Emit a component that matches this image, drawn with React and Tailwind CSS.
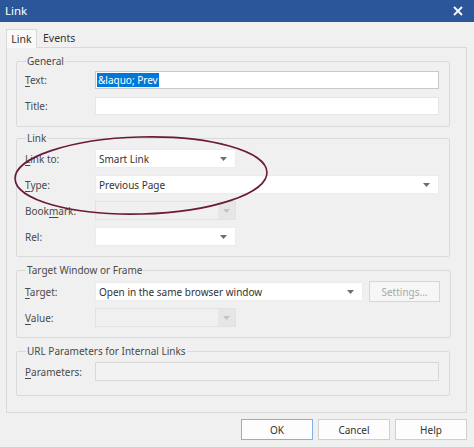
import React from 'react'

function Arrow({ light }) {
  return (
    <svg width="7" height="4" viewBox="0 0 7 4" className="shrink-0">
      <path d="M0 0 L7 0 L3.5 4 Z" fill={light ? '#c4c4c4' : '#6d6d6d'} />
    </svg>
  )
}

function Label({ text, u }) {
  // u = index of the access-key letter
  if (u === undefined) return <span className="w-[70px] shrink-0 text-[#4a4a4a]">{text}</span>
  return (
    <span className="w-[70px] shrink-0 text-[#4a4a4a]">
      {text.slice(0, u)}
      <span className="underline underline-offset-2">{text[u]}</span>
      {text.slice(u + 1)}
    </span>
  )
}

function Select({ value, width, disabled }) {
  if (disabled) {
    return (
      <div className={`${width} h-[19px] flex border border-[#e2e2e2] bg-[#f0f0f0]`}>
        <div className="flex-1" />
        <div className="w-[17px] bg-[#e6e6e6] flex items-center justify-center">
          <Arrow light />
        </div>
      </div>
    )
  }
  return (
    <div className={`${width} h-[19px] flex items-center justify-between bg-white border border-[#ececec] pl-[3px] pr-[8px]`}>
      <span className="text-[#333]">{value}</span>
      <Arrow />
    </div>
  )
}

function Group({ title, children, className }) {
  return (
    <fieldset className={`border border-[#dadada] rounded-[2px] pl-[8px] pr-[10px] ${className}`}>
      <legend className="ml-[1px] px-[1px] text-[#4a4a4a] leading-[16px]">{title}</legend>
      {children}
    </fieldset>
  )
}

function Row({ children, className }) {
  return <div className={`flex items-center ${className}`}>{children}</div>
}

export default function App() {
  return (
    <div className="w-[474px] h-[447px] bg-[#f0f0f0] relative flex flex-col font-['Segoe_UI','Noto_Sans',sans-serif] text-[10px] leading-[16px] overflow-hidden">
      {/* title bar */}
      <div className="h-[22px] bg-[#2b579a] flex items-center justify-between pl-[5px] pr-[11px] text-white">
        <span className="text-[11.5px]">Link</span>
        <svg width="10" height="10" viewBox="0 0 10 10">
          <path d="M1 1 L9 9 M9 1 L1 9" stroke="white" strokeWidth="1.8" />
        </svg>
      </div>

      {/* tabs */}
      <div className="flex items-end h-[25px] pl-[6px]">
        <div className="h-[19px] w-[31px] flex items-center justify-center bg-[#f9f9f9] border border-b-0 border-[#d9d9d9] text-[#333] text-[10.5px] -mb-px relative z-10">
          Link
        </div>
        <div className="h-[18px] px-[6px] flex items-center text-[#333] text-[10.5px]">Events</div>
      </div>

      {/* tab panel */}
      <div className="ml-[6px] w-[461px] h-[366px] border border-[#d9d9d9] pt-[5px] pl-[9px] pr-[16px] flex flex-col gap-[3px]">
        <Group title="General" className="pb-[11px]">
          <Row className="mt-[2px]">
            <Label text="Text:" u={0} />
            <div className="w-[344px] h-[18px] bg-white border border-[#c9c9c9] flex items-center pl-[1px]">
              <span className="bg-[#0078d7] text-white px-[1px] leading-[14px]">&amp;laquo; Prev</span>
            </div>
          </Row>
          <Row className="mt-[8px]">
            <Label text="Title:" />
            <div className="w-[344px] h-[18px] bg-white border border-[#e6e6e6]" />
          </Row>
        </Group>

        <Group title="Link" className="pb-[10px]">
          <Row className="mt-[3px]">
            <Label text="Link to:" u={0} />
            <Select value="Smart Link" width="w-[141px]" />
          </Row>
          <Row className="mt-[7px]">
            <Label text="Type:" u={0} />
            <Select value="Previous Page" width="w-[344px]" />
          </Row>
          <Row className="mt-[7px]">
            <Label text="Bookmark:" u={4} />
            <Select width="w-[141px]" disabled />
          </Row>
          <Row className="mt-[7px]">
            <Label text="Rel:" />
            <Select value="" width="w-[141px]" />
          </Row>
        </Group>

        <Group title="Target Window or Frame" className="pb-[10px] mt-[2px]">
          <Row className="mt-[3px]">
            <Label text="Target:" u={0} />
            <Select value="Open in the same browser window" width="w-[268px]" />
            <div className="ml-[6px] w-[71px] h-[21px] border border-[#d6d6d6] bg-[#f6f6f6] flex items-center justify-center text-[#a8a8a8]">
              Settings...
            </div>
          </Row>
          <Row className="mt-[6px]">
            <Label text="Value:" u={0} />
            <Select width="w-[141px]" disabled />
          </Row>
        </Group>

        <Group title="URL Parameters for Internal Links" className="pb-[14px] mt-[2px]">
          <Row className="mt-[3px]">
            <Label text="Parameters:" u={0} />
            <div className="w-[344px] h-[19px] bg-[#f2f2f2] border border-[#d8d8d8]" />
          </Row>
        </Group>
      </div>

      {/* buttons */}
      <div className="flex justify-end gap-[5px] pr-[7px] mt-[6px]">
        <button className="w-[72px] h-[21px] bg-[#fdfdfd] border border-[#7fb2e5] text-[#333]">OK</button>
        <button className="w-[72px] h-[21px] bg-[#fdfdfd] border border-[#d0d0d0] text-[#333]">Cancel</button>
        <button className="w-[72px] h-[21px] bg-[#fdfdfd] border border-[#d0d0d0] text-[#333]">Help</button>
      </div>

      {/* hand-drawn highlight ellipse */}
      <svg className="absolute left-0 top-0 pointer-events-none" width="474" height="447">
        <ellipse cx="141" cy="175.5" rx="126" ry="38.5" fill="none" stroke="#6b1a3c" strokeWidth="1.6" transform="rotate(-1.5 141 175.5)" />
      </svg>
    </div>
  )
}
